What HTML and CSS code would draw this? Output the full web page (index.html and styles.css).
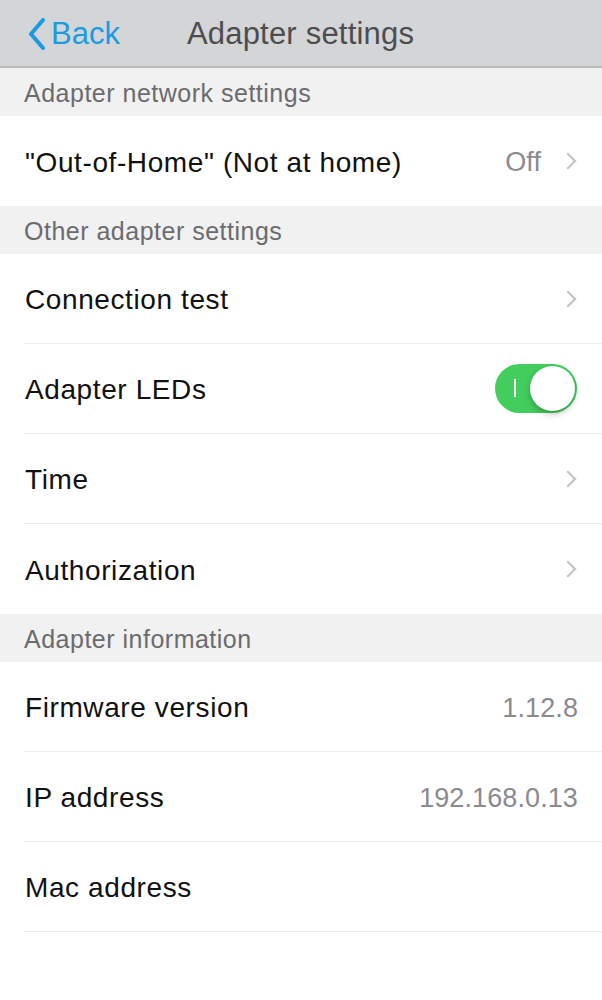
FILE: index.html
```html
<!DOCTYPE html>
<html>
<head>
<meta charset="utf-8">
<link rel="stylesheet" href="styles.css">
</head>
<body>
<div class="nav">
  <div class="back">
    <svg class="back-chev" width="20" height="32" viewBox="0 0 20 32"><path d="M16 2 L4 16 L16 30" fill="none" stroke="#1a9be2" stroke-width="4" stroke-linecap="round" stroke-linejoin="round"/></svg>
    <span>Back</span>
  </div>
  <div class="title">Adapter settings</div>
</div>

<div class="section">Adapter network settings</div>
<div class="group">
  <div class="row last"><span class="label">"Out-of-Home" (Not at home)</span><span class="right"><span class="value">Off</span><span class="chev"></span></span></div>
</div>

<div class="section">Other adapter settings</div>
<div class="group">
  <div class="row"><span class="label">Connection test</span><span class="right"><span class="chev"></span></span></div>
  <div class="row"><span class="label">Adapter LEDs</span><span class="right"><span class="switch"><span class="on-mark"></span><span class="knob"></span></span></span></div>
  <div class="row"><span class="label">Time</span><span class="right"><span class="chev"></span></span></div>
  <div class="row last"><span class="label">Authorization</span><span class="right"><span class="chev"></span></span></div>
</div>

<div class="section">Adapter information</div>
<div class="group">
  <div class="row"><span class="label">Firmware version</span><span class="right"><span class="value v2">1.12.8</span></span></div>
  <div class="row"><span class="label">IP address</span><span class="right"><span class="value v2">192.168.0.13</span></span></div>
  <div class="row"><span class="label">Mac address</span><span class="right"><span class="value v2"></span></span></div>
</div>
</body>
</html>
```

FILE: styles.css
```css
* { box-sizing: border-box; }
html, body { margin: 0; padding: 0; background: #ffffff; }
body {
  font-family: "Liberation Sans", Arial, sans-serif;
  width: 602px;
  height: 1000px;
  overflow: hidden;
}
.nav {
  height: 68px;
  background: #d4d5d7;
  border-bottom: 2px solid #b9babc;
  display: flex;
  align-items: center;
  position: relative;
}
.back {
  display: flex;
  align-items: center;
  color: #1a9be2;
  font-size: 31px;
  padding-left: 27px;
  height: 100%;
  padding-top: 1px;
}
.back-chev { margin-right: 4px; }
.title {
  color: #4d4d4f;
  font-size: 31px;
  letter-spacing: 0.2px;
  margin-left: 67px;
  padding-top: 1px;
}
.section {
  height: 48px;
  background: #f1f1f1;
  color: #6b6b6e;
  font-size: 25px;
  letter-spacing: 0.5px;
  display: flex;
  align-items: center;
  padding-left: 24px;
  padding-top: 3px;
}
.group { background: #ffffff; }
.row {
  height: 90px;
  margin-left: 24px;
  padding-right: 24px;
  border-bottom: 1px solid #ececec;
  display: flex;
  align-items: center;
  justify-content: space-between;
}
.row.last { border-bottom: none; }
.label {
  font-size: 28px;
  letter-spacing: 0.6px;
  color: #111111;
  margin-left: 1px;
  padding-top: 3px;
}
.right { display: flex; align-items: center; }
.value {
  font-size: 27px;
  letter-spacing: 0.1px;
  color: #8a8a8f;
  margin-right: 21px;
  padding-top: 3px;
}
.value.v2 { margin-right: 0; }
.chev {
  width: 12px;
  height: 12px;
  border-top: 2.5px solid #c4c4c8;
  border-right: 2.5px solid #c4c4c8;
  transform: rotate(45deg);
  margin-right: 4px;
}
.switch {
  width: 82px;
  height: 49px;
  border-radius: 25px;
  background: #42cd5c;
  position: relative;
  margin-right: 1px;
}
.on-mark {
  position: absolute;
  left: 19px;
  top: 15px;
  width: 2px;
  height: 18px;
  background: #ffffff;
}
.knob {
  position: absolute;
  right: 2px;
  top: 2px;
  width: 45px;
  height: 45px;
  border-radius: 50%;
  background: #ffffff;
  box-shadow: 0 3px 6px rgba(0,0,0,0.25);
}
```
